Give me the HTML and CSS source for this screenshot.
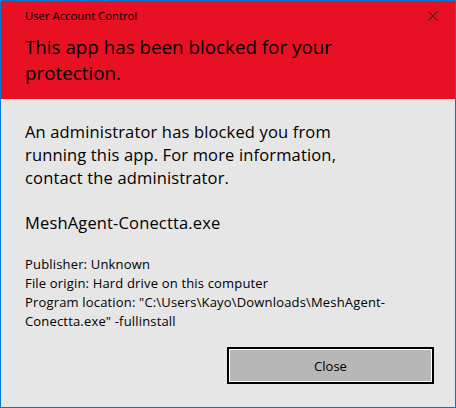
FILE: index.html
```html
<!DOCTYPE html>
<html lang="en">
<head>
<meta charset="utf-8">
<title>User Account Control</title>
<link rel="stylesheet" href="styles.css">
</head>
<body>
<div class="window">
  <div class="header">
    <div class="caption-row">
      <span class="caption">User Account Control</span>
      <svg class="close-icon" width="10" height="10" viewBox="0 0 10 10" aria-hidden="true">
        <path d="M0.5 0.5 L9.5 9.5 M9.5 0.5 L0.5 9.5" stroke="#1a1a1a" stroke-width="1" fill="none"/>
      </svg>
    </div>
    <div class="title">This app has been blocked for your protection.</div>
  </div>
  <div class="content">
    <p class="message">An administrator has blocked you from running this app. For more information, contact the administrator.</p>
    <p class="filename">MeshAgent-Conectta.exe</p>
    <div class="details">
      <div>Publisher: Unknown</div>
      <div>File origin: Hard drive on this computer</div>
      <div>Program location: "C:\Users\Kayo\Downloads\MeshAgent-Conectta.exe" -fullinstall</div>
    </div>
    <div class="actions">
      <button class="btn">Close</button>
    </div>
  </div>
</div>
</body>
</html>
```
FILE: styles.css
```css
html, body {
  margin: 0;
  padding: 0;
  background: #ffffff;
}
.window {
  width: 456px;
  height: 408px;
  box-sizing: border-box;
  border: 1px solid #0078d7;
  background: #e6e6e6;
  display: flex;
  flex-direction: column;
  font-family: "Open Sans", "Noto Sans", sans-serif;
  color: #000;
}
.header {
  background: #e81123;
  height: 98px;
  flex: none;
  padding-left: 24px;
}
.caption-row {
  height: 30px;
  display: flex;
  align-items: center;
  justify-content: space-between;
  padding-right: 17px;
}
.caption {
  font-size: 11.3px;
  line-height: 30px;
}
.close-icon {
  display: block;
}
.title {
  margin-top: 3px;
  font-size: 18.8px;
  line-height: 26px;
  width: 340px;
}
.content {
  flex: 1;
  padding: 21px 21px 0 24px;
  display: flex;
  flex-direction: column;
}
.message {
  margin: 0;
  font-size: 16.5px;
  letter-spacing: 0.15px;
  line-height: 23px;
  width: 340px;
}
.filename {
  margin: 22px 0 0;
  font-size: 16.5px;
  letter-spacing: 0.15px;
  line-height: 23px;
}
.details {
  margin-top: 21px;
  font-size: 13px;
  letter-spacing: 0.17px;
  line-height: 19px;
  width: 370px;
}
.actions {
  margin-top: 16px;
  display: flex;
  justify-content: flex-end;
}
.btn {
  width: 207px;
  height: 37px;
  box-sizing: border-box;
  border: 2px solid #000;
  box-shadow: inset 0 0 0 1px #ffffff;
  background: #b7b7b7;
  font-family: inherit;
  font-size: 13px;
  color: #000;
  padding: 0;
}
```
